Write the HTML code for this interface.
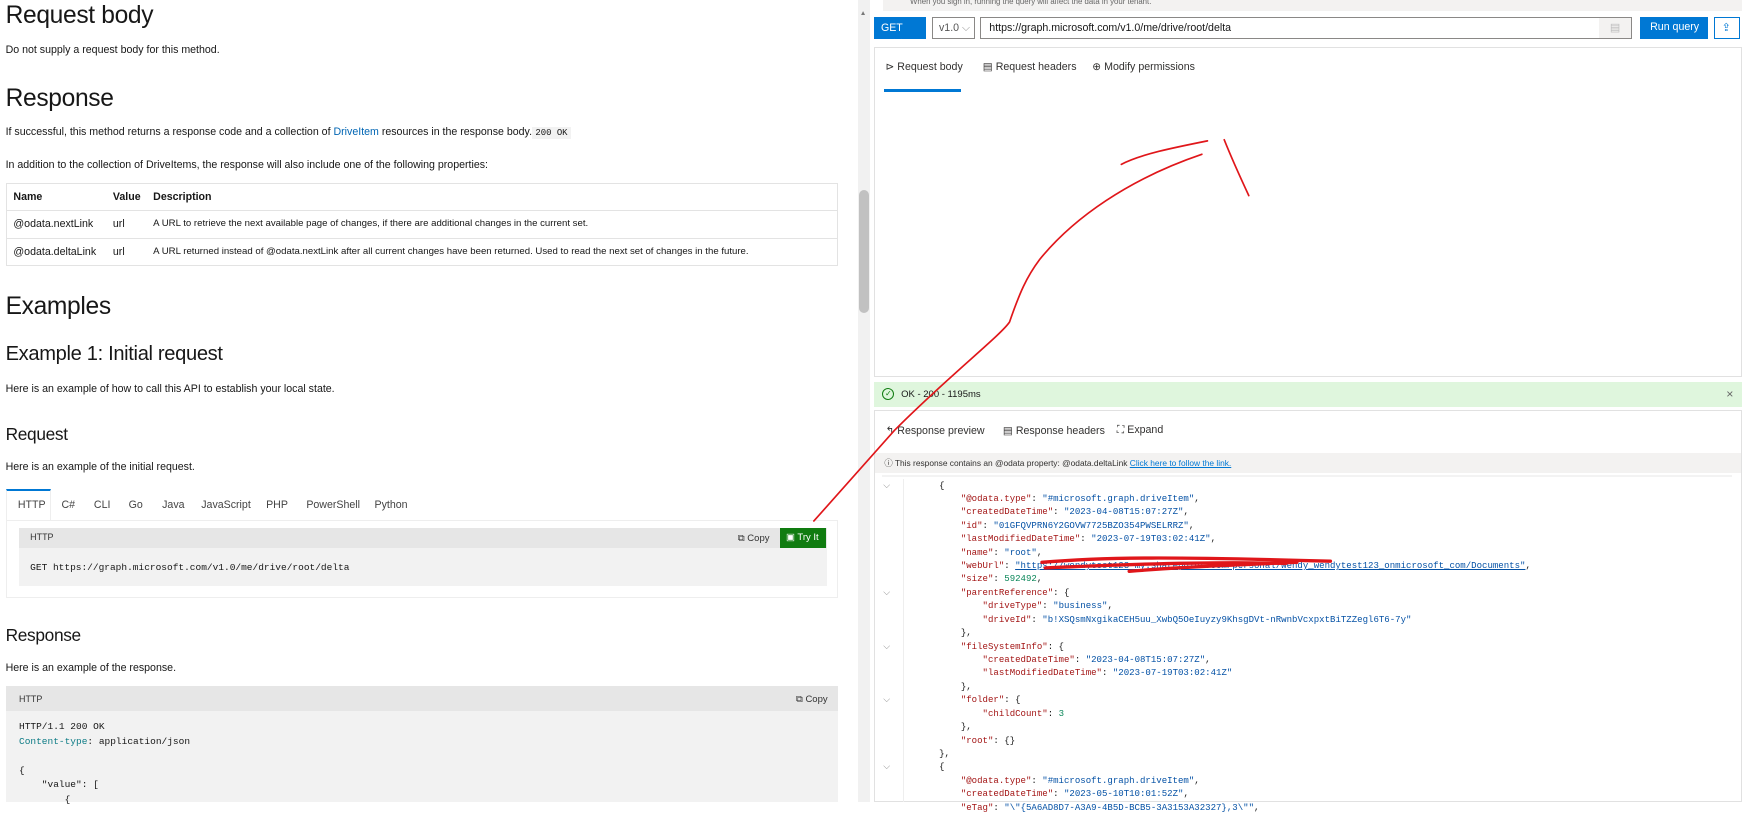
<!DOCTYPE html>
<html><head><meta charset="utf-8">
<style>
*{margin:0;padding:0;box-sizing:border-box}
html,body{width:1744px;height:801px;overflow:hidden;background:#fff}
#w{position:absolute;left:0;top:0;width:1560px;height:717px;zoom:1.118;font-family:"Liberation Sans",sans-serif;color:#171717;font-size:9.5px}
.a{position:absolute;white-space:nowrap}
h1{position:absolute;font-size:22px;letter-spacing:-0.3px;white-space:nowrap;font-weight:normal}
.h2{font-size:18px}
.h3{font-size:15.5px}
.mono{font-family:"Liberation Mono",monospace}
.btn{position:absolute;background:#0078d4;color:#fff}
.k{color:#a31515}
.s{color:#0451a5}
.n{color:#098658}
.tab{position:absolute;color:#444;font-size:9.5px}
</style></head><body><div id="w">
<!-- LEFT -->
<h1 class="a" style="left:5px;top:2px">Request body</h1>
<div class="a" style="left:5px;top:39px">Do not supply a request body for this method.</div>
<h1 class="a" style="left:5px;top:76px">Response</h1>
<div class="a" style="left:5px;top:113px">If successful, this method returns a response code and a collection of <span style="color:#0065b3">DriveItem</span> resources in the response body.<span class="mono" style="background:#f2f2f2;font-size:8px;padding:1px 3px">200 OK</span></div>
<div class="a" style="left:5px;top:142px">In addition to the collection of DriveItems, the response will also include one of the following properties:</div>
<div class="a" style="left:5px;top:164px;width:745px;height:74px;border:1px solid #e3e3e3"></div>
<div class="a" style="left:5px;top:188px;width:745px;height:1px;background:#e3e3e3"></div>
<div class="a" style="left:5px;top:213px;width:745px;height:1px;background:#e3e3e3"></div>
<div class="a" style="left:12px;top:171px;font-weight:bold">Name</div>
<div class="a" style="left:101px;top:171px;font-weight:bold">Value</div>
<div class="a" style="left:137px;top:171px;font-weight:bold">Description</div>
<div class="a" style="left:12px;top:195px">@odata.nextLink</div><div class="a" style="left:101px;top:195px">url</div>
<div class="a" style="left:137px;top:195px;font-size:8.6px">A URL to retrieve the next available page of changes, if there are additional changes in the current set.</div>
<div class="a" style="left:12px;top:220px">@odata.deltaLink</div><div class="a" style="left:101px;top:220px">url</div>
<div class="a" style="left:137px;top:220px;font-size:8.6px">A URL returned instead of <b style="font-weight:normal">@odata.nextLink</b> after all current changes have been returned. Used to read the next set of changes in the future.</div>
<h1 class="a" style="left:5px;top:262px">Examples</h1>
<h1 class="a h2" style="left:5px;top:307px">Example 1: Initial request</h1>
<div class="a" style="left:5px;top:343px">Here is an example of how to call this API to establish your local state.</div>
<h1 class="a h3" style="left:5px;top:379px">Request</h1>
<div class="a" style="left:5px;top:412px">Here is an example of the initial request.</div>
<div class="a" style="left:5px;top:437px;width:41px;height:29px;border-top:2px solid #0078d4;border-left:1px solid #eee;border-right:1px solid #eee;background:#fff"></div>
<div class="tab" style="left:16px;top:446px">HTTP</div><div class="tab" style="left:55px;top:446px">C#</div><div class="tab" style="left:84px;top:446px">CLI</div><div class="tab" style="left:115px;top:446px">Go</div><div class="tab" style="left:145px;top:446px">Java</div><div class="tab" style="left:180px;top:446px">JavaScript</div><div class="tab" style="left:238px;top:446px">PHP</div><div class="tab" style="left:274px;top:446px">PowerShell</div><div class="tab" style="left:335px;top:446px">Python</div>
<div class="a" style="left:5px;top:465px;width:745px;height:70px;border:1px solid #eee"></div>
<div class="a" style="left:17px;top:472px;width:723px;height:52px;background:#f2f2f2"></div>
<div class="a" style="left:17px;top:472px;width:723px;height:18px;background:#e6e6e6"></div>
<div class="a" style="left:27px;top:476px;font-size:8px;color:#333">HTTP</div>
<div class="a" style="left:660px;top:477px;font-size:8.5px;color:#333">⧉ Copy</div>
<div class="a" style="left:698px;top:472px;width:41px;height:18px;background:#107c10;color:#fff;font-size:8.5px;padding:4px 0 0 5px">▣ Try It</div>
<div class="a mono" style="left:27px;top:503px;font-size:8.5px">GET https://graph.microsoft.com/v1.0/me/drive/root/delta</div>
<h1 class="a h3" style="left:5px;top:559px">Response</h1>
<div class="a" style="left:5px;top:592px">Here is an example of the response.</div>
<div class="a" style="left:5px;top:614px;width:745px;height:103px;background:#f2f2f2"></div>
<div class="a" style="left:5px;top:614px;width:745px;height:22px;background:#e6e6e6"></div>
<div class="a" style="left:17px;top:621px;font-size:8px;color:#333">HTTP</div>
<div class="a" style="left:712px;top:621px;font-size:8.5px;color:#333">⧉ Copy</div>
<div class="a mono" style="left:17px;top:644px;font-size:8.5px;line-height:13px">HTTP/1.1 200 OK<br><span style="color:#0e7c86">Content-type</span>: application/json<br><br>{<br>&nbsp;&nbsp;&nbsp;&nbsp;"value": [<br>&nbsp;&nbsp;&nbsp;&nbsp;&nbsp;&nbsp;&nbsp;&nbsp;{</div>
<div class="a" style="left:767px;top:0;width:11px;height:717px;background:#f1f1f1"></div>
<div class="a" style="left:769px;top:9px;font-size:6px;color:#777">▲</div>
<div class="a" style="left:768px;top:170px;width:9px;height:110px;background:#c1c1c1;border-radius:5px"></div>
<!-- RIGHT -->
<div class="a" style="left:790px;top:0;width:768px;height:10px;background:#f3f2f1;font-size:7px;color:#666;padding-left:24px;line-height:3px">When you sign in, running the query will affect the data in your tenant.</div>
<div class="btn" style="left:782px;top:15px;width:46px;height:20px;font-size:9.5px;padding:5px 0 0 6px">GET <span style="margin-left:12px">⌵</span></div>
<div class="a" style="left:834px;top:15px;width:38px;height:20px;border:1px solid #8a8886;color:#555;padding:4px 0 0 5px">v1.0 <span style="color:#999">⌵</span></div>
<div class="a" style="left:877px;top:15px;width:583px;height:20px;border:1px solid #8a8886;padding:4px 0 0 7px;font-size:9.5px">https://graph.microsoft.com/v1.0/me/drive/root/delta</div>
<div class="a" style="left:1430px;top:16px;width:29px;height:18px;background:#f3f2f1;color:#bbb;font-size:10px;padding:3px 0 0 10px">▤</div>
<div class="btn" style="left:1467px;top:15px;width:61px;height:20px;font-size:9.5px;padding:4px 0 0 9px">Run query</div>
<div class="a" style="left:1533px;top:15px;width:23px;height:20px;border:1px solid #0078d4;color:#0078d4;padding:3px 0 0 6px;font-size:10px">⇪</div>
<div class="a" style="left:782px;top:42px;width:776px;height:295px;border:1px solid #e1e1e1"></div>
<div class="tab" style="left:792px;top:54px;color:#323130">⊳ Request body</div>
<div class="a" style="left:791px;top:80px;width:69px;height:2px;background:#0078d4"></div>
<div class="tab" style="left:879px;top:54px;color:#323130">▤ Request headers</div>
<div class="tab" style="left:977px;top:54px;color:#323130">⊕ Modify permissions</div>
<div class="a" style="left:782px;top:342px;width:776px;height:22px;background:#dff6dd"></div>
<div class="a" style="left:789px;top:347px;width:11px;height:11px;border:1px solid #107c10;border-radius:50%;color:#107c10;font-size:7px;text-align:center;line-height:9px">✓</div>
<div class="a" style="left:806px;top:348px;font-size:8.5px">OK - 200 - 1195ms</div>
<div class="a" style="left:1544px;top:346px;font-size:11px;color:#666">×</div>
<div class="a" style="left:782px;top:367px;width:776px;height:350px;border:1px solid #e1e1e1"></div>
<div class="tab" style="left:792px;top:379px;color:#323130">↰ Response preview</div>
<div class="a" style="left:791px;top:405px;width:86px;height:3px;background:#0078d4"></div>
<div class="tab" style="left:897px;top:379px;color:#323130">▤ Response headers</div>
<div class="tab" style="left:999px;top:379px;color:#323130">⛶ Expand</div>
<div class="a" style="left:783px;top:405px;width:774px;height:18px;background:#f3f2f1;font-size:7.5px;padding:4px 0 0 8px;color:#323130">ⓘ This response contains an @odata property: @odata.deltaLink <span style="color:#0078d4;text-decoration:underline">Click here to follow the link.</span></div>
<div class="a" style="left:789px;top:425px;width:760px;height:2px;background:#f3f3f3"></div>
<div class="a" style="left:808px;top:428px;width:1px;height:289px;background:#eee"></div>
<div class="a" style="left:790px;top:428px;font-size:8px;color:#888;line-height:12px">⌵<br><br><br><br><br><br><br><br>⌵<br><br><br><br>⌵<br><br><br><br>⌵<br><br><br><br><br>⌵</div>
<div class="a mono" style="left:840px;top:428px;font-size:8.1px;line-height:12px;white-space:pre">{
    <span class="k">"@odata.type"</span>: <span class="s">"#microsoft.graph.driveItem"</span>,
    <span class="k">"createdDateTime"</span>: <span class="s">"2023-04-08T15:07:27Z"</span>,
    <span class="k">"id"</span>: <span class="s">"01GFQVPRN6Y2GOVW7725BZO354PWSELRRZ"</span>,
    <span class="k">"lastModifiedDateTime"</span>: <span class="s">"2023-07-19T03:02:41Z"</span>,
    <span class="k">"name"</span>: <span class="s">"root"</span>,
    <span class="k">"webUrl"</span>: <span class="s" style="text-decoration:underline">"https://wendytest123-my.sharepoint.com/personal/wendy_wendytest123_onmicrosoft_com/Documents"</span>,
    <span class="k">"size"</span>: <span class="n">592492</span>,
    <span class="k">"parentReference"</span>: {
        <span class="k">"driveType"</span>: <span class="s">"business"</span>,
        <span class="k">"driveId"</span>: <span class="s">"b!XSQsmNxgikaCEH5uu_XwbQ5OeIuyzy9KhsgDVt-nRwnbVcxpxtBiTZZegl6T6-7y"</span>
    },
    <span class="k">"fileSystemInfo"</span>: {
        <span class="k">"createdDateTime"</span>: <span class="s">"2023-04-08T15:07:27Z"</span>,
        <span class="k">"lastModifiedDateTime"</span>: <span class="s">"2023-07-19T03:02:41Z"</span>
    },
    <span class="k">"folder"</span>: {
        <span class="k">"childCount"</span>: <span class="n">3</span>
    },
    <span class="k">"root"</span>: {}
},
{
    <span class="k">"@odata.type"</span>: <span class="s">"#microsoft.graph.driveItem"</span>,
    <span class="k">"createdDateTime"</span>: <span class="s">"2023-05-10T10:01:52Z"</span>,
    <span class="k">"eTag"</span>: <span class="s">"\"{5A6AD8D7-A3A9-4B5D-BCB5-3A3153A32327},3\""</span>,</div>
<!-- annotations -->
<svg class="a" style="left:0;top:0" width="1560" height="717" viewBox="0 0 1560 717">
<g fill="none" stroke="#e0161a" stroke-width="1.5" stroke-linecap="round">
<path d="M728,466 L800,385 C850,335 895,300 903,288 C912,262 918,248 930,232 C960,195 1010,160 1075,138"/>
<path d="M1003,147 C1020,138 1050,132 1080,126"/>
<path d="M1095,125 C1103,145 1110,160 1117,175"/>
</g>
<g fill="none" stroke="#e0161a" stroke-width="3" stroke-linecap="round">
<path d="M932,503 C990,498 1050,498 1190,502"/>
<path d="M935,508 C1000,505 1080,502 1150,504"/>
<path d="M1010,511 C1060,507 1110,505 1160,503"/>
</g>
</svg>
</div></body></html>
